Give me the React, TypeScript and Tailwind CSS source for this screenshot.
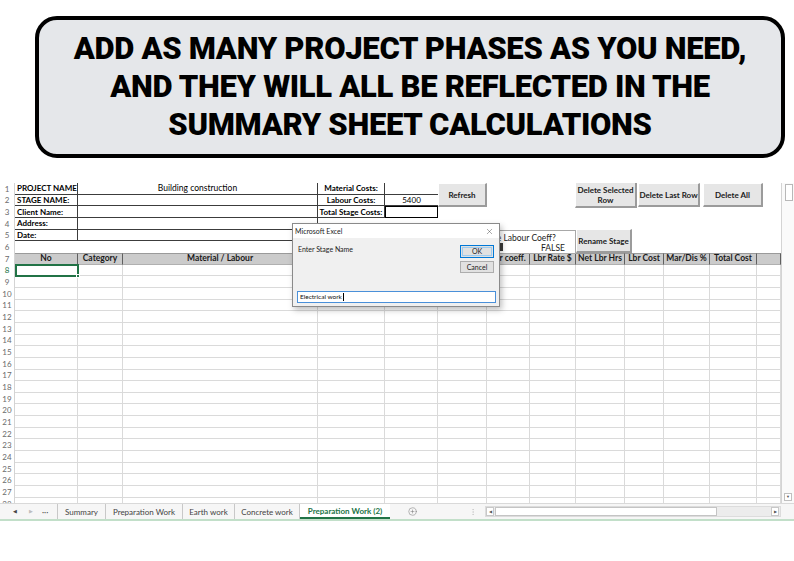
import { Fragment } from "react";
import { X, CirclePlus, EllipsisVertical } from "lucide-react";

const grid =
  "grid grid-cols-[15px_63px_45px_195px_67px_53px_49px_43px_46px_49px_39px_46px_47px_24px] auto-rows-[11.67px]";

const info = ["PROJECT NAME", "STAGE NAME:", "Client Name:", "Address:", "Date:"];
const costs = ["Material Costs:", "Labour Costs:", "Total Stage Costs:"];
const headers = [
  "No",
  "Category",
  "Material / Labour",
  "Quantity",
  "Unit",
  "Cost",
  "Lbr coeff.",
  "Lbr Rate $",
  "Net Lbr Hrs",
  "Lbr Cost",
  "Mar/Dis %",
  "Total Cost",
  "",
];
const body = Array.from({ length: 21 }, (_, i) => i + 8);
const tabs = [
  { name: "Summary", w: "w-[48px]" },
  { name: "Preparation Work", w: "w-[77px]" },
  { name: "Earth work", w: "w-[52px]" },
  { name: "Concrete work", w: "w-[65px]" },
];

function Num({ n, active }: { n: number; active?: boolean }) {
  return (
    <div
      className={`flex items-center justify-center border-r border-[#d4d4d4] text-[8px] ${
        active ? "text-[#217346]" : "text-[#6b6b6b]"
      }`}
    >
      {n}
    </div>
  );
}

function Btn({ className, children }: { className: string; children: React.ReactNode }) {
  return (
    <div
      className={`absolute flex items-center justify-center bg-[#e6e6e6] border-t border-l border-t-white border-l-white border-r-2 border-b-2 border-r-[#9b9b9b] border-b-[#9b9b9b] text-center text-[8px] leading-[10px] font-bold text-[#1a1a1a] ${className}`}
    >
      {children}
    </div>
  );
}

function Banner() {
  return (
    <div className="ml-[35px] mt-[16px] w-[750px] h-[142px] rounded-[22px] border-[4px] border-black bg-[#e5e7ea] flex flex-col items-center justify-center font-[Roboto,sans-serif] font-black text-[31px] leading-[38px] tracking-[-0.3px] text-black">
      <div>ADD AS MANY PROJECT PHASES AS YOU NEED,</div>
      <div>AND THEY WILL ALL BE REFLECTED IN THE</div>
      <div>SUMMARY SHEET CALCULATIONS</div>
    </div>
  );
}

function Dialog() {
  return (
    <div className="absolute left-[292px] top-[40px] w-[208px] h-[84px] bg-[#f0f0f0] border border-[#8a8a8a] shadow-[2px_3px_6px_rgba(0,0,0,0.25)] flex flex-col">
      <div className="h-[14px] bg-white flex items-center justify-between pl-[2px] pr-[5px] text-[7px] text-[#222]">
        <span>Microsoft Excel</span>
        <X size={9} strokeWidth={1} />
      </div>
      <div className="relative flex-1">
        <div className="absolute left-[5px] top-[6px] text-[7px] text-[#222]">Enter Stage Name</div>
        <div className="absolute left-[167px] top-[7px] w-[34px] h-[13px] border border-[#0078d7] bg-[#e1e1e1] p-[1px]">
          <div className="h-full border border-[#9ccbf0] flex items-center justify-center text-[7px] text-[#222]">OK</div>
        </div>
        <div className="absolute left-[167px] top-[23px] w-[34px] h-[12px] border border-[#adadad] bg-[#e1e1e1] flex items-center justify-center text-[7px] text-[#222]">
          Cancel
        </div>
        <div className="absolute left-[4px] top-[53px] w-[199px] h-[12px] border border-[#4a90d9] bg-white flex items-center pl-[2px] text-[6.5px] text-[#111]">
          Electrical work
          <span className="ml-[1px] w-px h-[8px] bg-black" />
        </div>
      </div>
    </div>
  );
}

function Sheet() {
  return (
    <div className="flex">
      <div className="relative w-[781px] h-[320px] overflow-hidden">
        <div className={grid}>
          {info.map((label, i) => (
            <Fragment key={label}>
              <Num n={i + 1} />
              <div className="flex items-center pl-[2px] border-b border-r border-[#3c3c3c] whitespace-nowrap text-[8px] font-bold">
                {label}
              </div>
              <div className="col-span-2 flex items-center justify-center border-b border-r border-[#3c3c3c] text-[8.5px]">
                {i === 0 ? "Building construction" : ""}
              </div>
              {i < 3 ? (
                <>
                  <div className="flex items-center justify-center border-b border-r border-[#3c3c3c] whitespace-nowrap text-[8px] font-bold">
                    {costs[i]}
                  </div>
                  {i === 2 ? (
                    <div className="border-[1.5px] border-black" />
                  ) : (
                    <div className="flex items-center justify-center border-b border-[#3c3c3c] text-[8px]">
                      {i === 1 ? "5400" : ""}
                    </div>
                  )}
                  <div className="col-span-8" />
                </>
              ) : (
                <div className="col-span-10" />
              )}
            </Fragment>
          ))}
          <Num n={6} />
          <div className="col-span-13" />
          <Num n={7} />
          {headers.map((h, i) => (
            <div
              key={i}
              className="flex items-center justify-center overflow-hidden bg-[#cbcbcb] border-t border-b border-r border-t-[#9a9a9a] border-b-[#b0b0b0] border-r-[#5f5f5f] whitespace-nowrap text-[8.5px] font-bold text-[#1a1a1a]"
            >
              {h}
            </div>
          ))}
          {body.map((n) => (
            <Fragment key={n}>
              <Num n={n} active={n === 8} />
              {headers.map((_, i) => (
                <div key={i} className="border-r border-b border-[#dadada]" />
              ))}
            </Fragment>
          ))}
        </div>

        <div className="absolute left-[15px] top-[81px] w-[64px] h-[13px] border-2 border-[#217346]">
          <div className="absolute -right-[3px] -bottom-[3px] w-[4px] h-[4px] bg-[#217346] border border-white" />
        </div>

        <Btn className="left-[438px] top-0 w-[49px] h-[24px]">Refresh</Btn>
        <Btn className="left-[575px] top-[-1px] w-[62px] h-[26px]">
          Delete Selected
          <br />
          Row
        </Btn>
        <Btn className="left-[638px] top-0 w-[62px] h-[24px]">Delete Last Row</Btn>
        <Btn className="left-[703px] top-0 w-[60px] h-[24px]">Delete All</Btn>

        <div className="absolute left-[440px] top-[47px] w-[136px] h-[24px] bg-white border border-[#a8a8a8] text-[8.5px] text-[#222]">
          <div className="absolute left-[46px] top-[1px]">Use Labour Coeff?</div>
          <div className="absolute left-[50px] top-[12px] w-[12px] h-[8px] bg-[#3a3a3a]" />
          <div className="absolute left-[100px] top-[11px]">FALSE</div>
        </div>
        <Btn className="left-[576px] top-[46px] w-[56px] h-[24px]">Rename Stage</Btn>

        <Dialog />
      </div>
      <div className="relative w-[13px] h-[320px] border-l border-[#d4d4d4] bg-[#fafafa]">
        <div className="absolute left-[3px] top-[1px] w-[8px] h-[17px] bg-white border border-[#b8b8b8]" />
        <div className="absolute left-[2px] bottom-[2px] w-[8px] h-[8px] bg-white border border-[#c0c0c0] flex items-center justify-center text-[4px] text-[#555]">
          ▼
        </div>
      </div>
    </div>
  );
}

function Tabs() {
  return (
    <div className="h-[18px] flex items-center border-t border-[#d9d9d9] border-b-2 border-b-[#c2dfc9] bg-[#f6f6f6] text-[8px] text-[#444]">
      <div className="w-[58px] h-full flex items-center border-r border-[#c8c8c8]">
        <span className="ml-[13px] text-[5px] text-[#444]">◀</span>
        <span className="ml-[12px] text-[5px] text-[#bdbdbd]">▶</span>
        <span className="ml-[9px] text-[#444]">···</span>
      </div>
      {tabs.map((t) => (
        <div key={t.name} className={`${t.w} h-full flex items-center justify-center border-r border-[#c8c8c8] whitespace-nowrap`}>
          {t.name}
        </div>
      ))}
      <div className="w-[90px] h-full flex items-center justify-center bg-white border-b-2 border-[#217346] whitespace-nowrap font-bold text-[#217346]">
        Preparation Work (2)
      </div>
      <div className="w-[95px] h-full flex items-center">
        <CirclePlus size={9} strokeWidth={1.2} className="ml-[18px] text-[#666]" />
        <EllipsisVertical size={8} strokeWidth={1.5} className="ml-[52px] text-[#bbb]" />
      </div>
      <div className="w-[296px] h-[11px] flex items-center gap-[1px] bg-[#ececec] border border-[#dcdcdc]">
        <div className="w-[8px] h-[9px] bg-white border border-[#c8c8c8] flex items-center justify-center text-[4px] text-[#555]">◀</div>
        <div className="w-[222px] h-[9px] bg-white border border-[#c4c4c4]" />
        <div className="ml-auto mr-[1px] w-[8px] h-[9px] bg-white border border-[#c8c8c8] flex items-center justify-center text-[4px] text-[#555]">▶</div>
      </div>
    </div>
  );
}

export default function App() {
  return (
    <div className="w-[794px] h-[561px] bg-white overflow-hidden font-[Lato,'Liberation_Sans',sans-serif] text-black">
      <Banner />
      <div className="mt-[25px]">
        <Sheet />
        <Tabs />
      </div>
    </div>
  );
}
